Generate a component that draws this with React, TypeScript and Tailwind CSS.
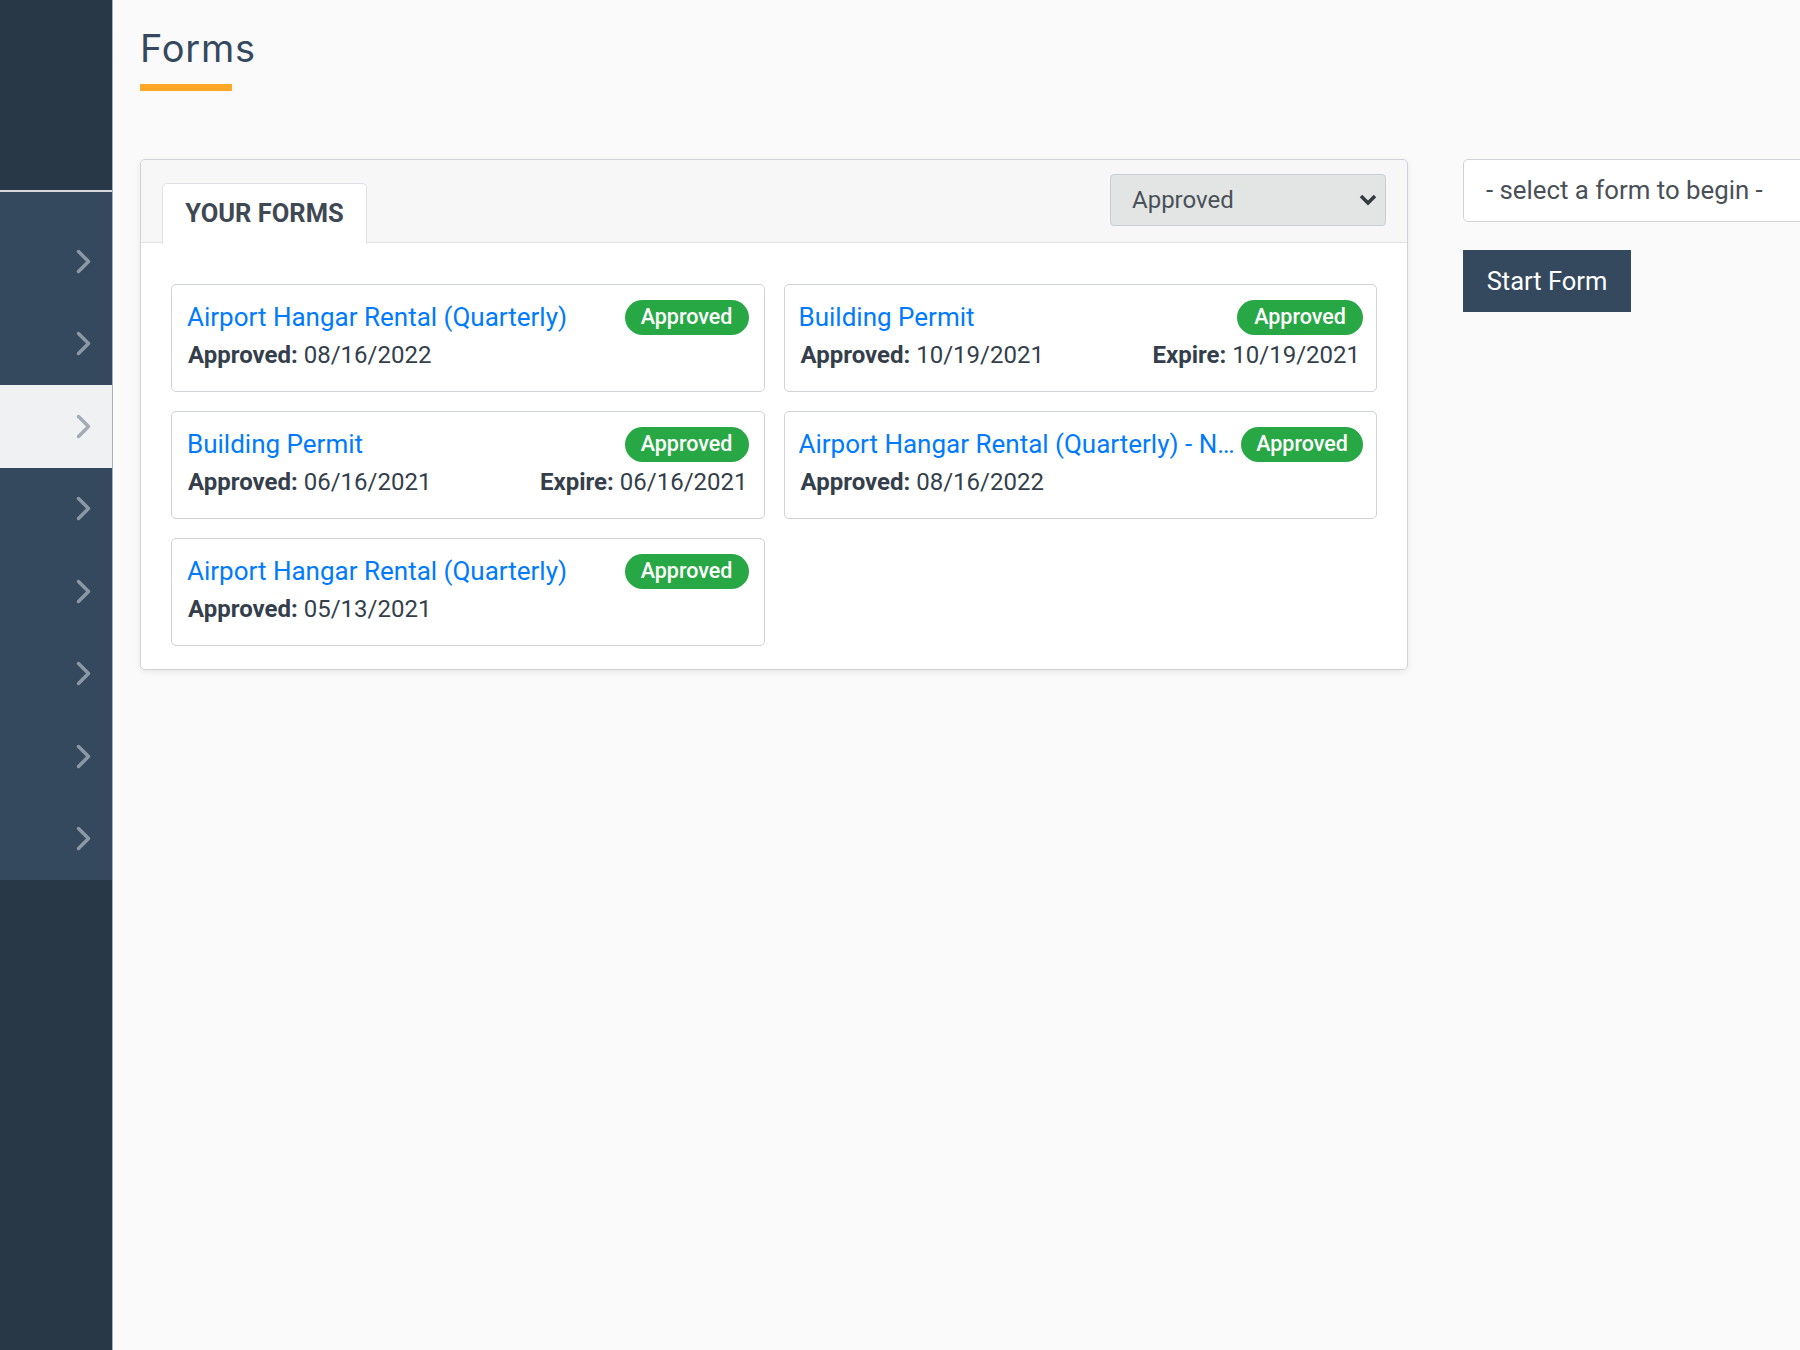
import { useState } from 'react';

const navItems = [0, 1, 2, 3, 4, 5, 6, 7];
const activeNav = 2;

const forms = [
  { id: 1, title: 'Airport Hangar Rental (Quarterly)', approved: '08/16/2022', badgePad: 'px-[16px]', datePad: 'pl-[1px] pr-[1px]' },
  { id: 2, title: 'Building Permit', approved: '10/19/2021', expire: '10/19/2021', badgePad: 'px-[17px]', datePad: 'pl-[2px] pr-[3px]' },
  { id: 3, title: 'Building Permit', approved: '06/16/2021', expire: '06/16/2021', badgePad: 'px-[16px]', datePad: 'pl-[1px] pr-[1px]' },
  { id: 4, title: 'Airport Hangar Rental (Quarterly) - New Tenant', approved: '08/16/2022', badgePad: 'px-[15px]', datePad: 'pl-[2px] pr-[3px]' },
  { id: 5, title: 'Airport Hangar Rental (Quarterly)', approved: '05/13/2021', badgePad: 'px-[16px]', datePad: 'pl-[1px] pr-[1px]' },
];

function Chevron() {
  return (
    <svg width="15" height="25" viewBox="0 0 15 25" fill="none" className="block">
      <path d="M2.5 2.5 L12.5 12.5 L2.5 22.5" stroke="currentColor" strokeWidth="3.5" strokeLinecap="round" strokeLinejoin="round" />
    </svg>
  );
}

function FormCard({ form }: { form: (typeof forms)[number] }) {
  return (
    <div className="h-[107.5px] rounded-[5px] border-[1.5px] border-[#cfd3d8] bg-white px-[15px] pt-[14.5px] even:pr-[13px] even:pl-[14px]">
      <div className="flex h-[35px] items-center justify-between gap-[5px]">
        <a href="#" className="min-w-0 truncate text-[26px] leading-[35px] text-[#007bff]">
          {form.title}
        </a>
        <span className={`shrink-0 rounded-full bg-[#28a745] pb-[2px] text-[21.5px] leading-[33px] font-medium text-white ${form.badgePad}`}>
          Approved
        </span>
      </div>
      <div className={`mt-[2px] flex justify-between text-[24px] leading-9 text-[#343f4b] ${form.datePad}`}>
        <span>
          <b className="font-bold">Approved:</b> {form.approved}
        </span>
        {form.expire && (
          <span>
            <b className="font-bold">Expire:</b> {form.expire}
          </span>
        )}
      </div>
    </div>
  );
}

export default function App() {
  const [status, setStatus] = useState('Approved');

  return (
    <div className="flex h-[1350px] w-[1800px] overflow-hidden bg-[#fafafa] font-['Roboto',sans-serif]">
      {/* sidebar */}
      <aside className="w-[113px] shrink-0 border-r-[1.5px] border-[#a9b2bb] bg-[#293847]">
        <div className="h-[190px]" />
        <div className="border-t-2 border-[#d5d9dd] bg-[#34495e] pt-[28px]">
          {navItems.map((i) => (
            <div
              key={i}
              className={
                i === activeNav
                  ? 'flex h-[82.5px] items-center justify-end bg-[#f0f1f3] pr-[21px] text-[#a3abb5]'
                  : 'flex h-[82.5px] items-center justify-end pr-[21px] text-[#8c98a5]'
              }
            >
              <Chevron />
            </div>
          ))}
        </div>
      </aside>

      <main className="flex-1 pl-[27px]">
        <h1 className="pt-[24px] font-['Inter',sans-serif] text-[38px] leading-[48px] font-normal tracking-[0.8px] text-[#34495e]">
          Forms
        </h1>
        <div className="mt-[12px] h-[7px] w-[92px] bg-[#ffa726]" />

        <div className="mt-[68px] flex items-start gap-[55px]">
          {/* forms panel */}
          <section className="w-[1268px] shrink-0 rounded-[5px] border-[1.5px] border-[#cfd3d8] bg-white shadow-[0_2px_6px_rgba(0,0,0,0.08)]">
            <div className="flex h-[83px] items-end justify-between rounded-t-[5px] border-b-[1.5px] border-[#dfe1e4] bg-[#f7f7f7] pr-[21px] pl-[21px]">
              <div className="mb-[-1.5px] flex h-[61px] w-[205px] items-center justify-center rounded-t-[5px] border-[1.5px] border-b-0 border-[#dfe1e4] bg-white text-[25.5px] font-bold text-[#3f4954]">
                YOUR FORMS
              </div>
              <div className="relative mb-[16px] h-[52px] w-[276px]">
                <select
                  value={status}
                  onChange={(e) => setStatus(e.target.value)}
                  className="h-full w-full appearance-none rounded-[4px] border-[1.5px] border-[#c8cdd2] bg-[#e3e5e5] pl-[21px] text-[24px] text-[#495057]"
                >
                  <option>Approved</option>
                </select>
                <svg width="20" height="12" viewBox="0 0 20 12" fill="none" className="pointer-events-none absolute top-[20px] right-[8px]">
                  <path d="M3 2 L10 9 L17 2" stroke="#343a40" strokeWidth="3.5" />
                </svg>
              </div>
            </div>
            <div className="grid grid-cols-2 gap-x-[19px] gap-y-[19.5px] px-[30px] pt-[41px] pb-[23px]">
              {forms.map((f) => (
                <FormCard key={f.id} form={f} />
              ))}
            </div>
          </section>

          {/* start a form */}
          <div className="w-[500px] shrink-0">
            <div className="flex h-[63px] items-center rounded-[5px] border-[1.5px] border-[#cfd3d8] bg-white pl-[22px] text-[25.8px] text-[#495057]">
              - select a form to begin -
            </div>
            <button type="button" className="mt-[28px] h-[62px] w-[168px] bg-[#34495e] text-[25.5px] text-white">
              Start Form
            </button>
          </div>
        </div>
      </main>
    </div>
  );
}
